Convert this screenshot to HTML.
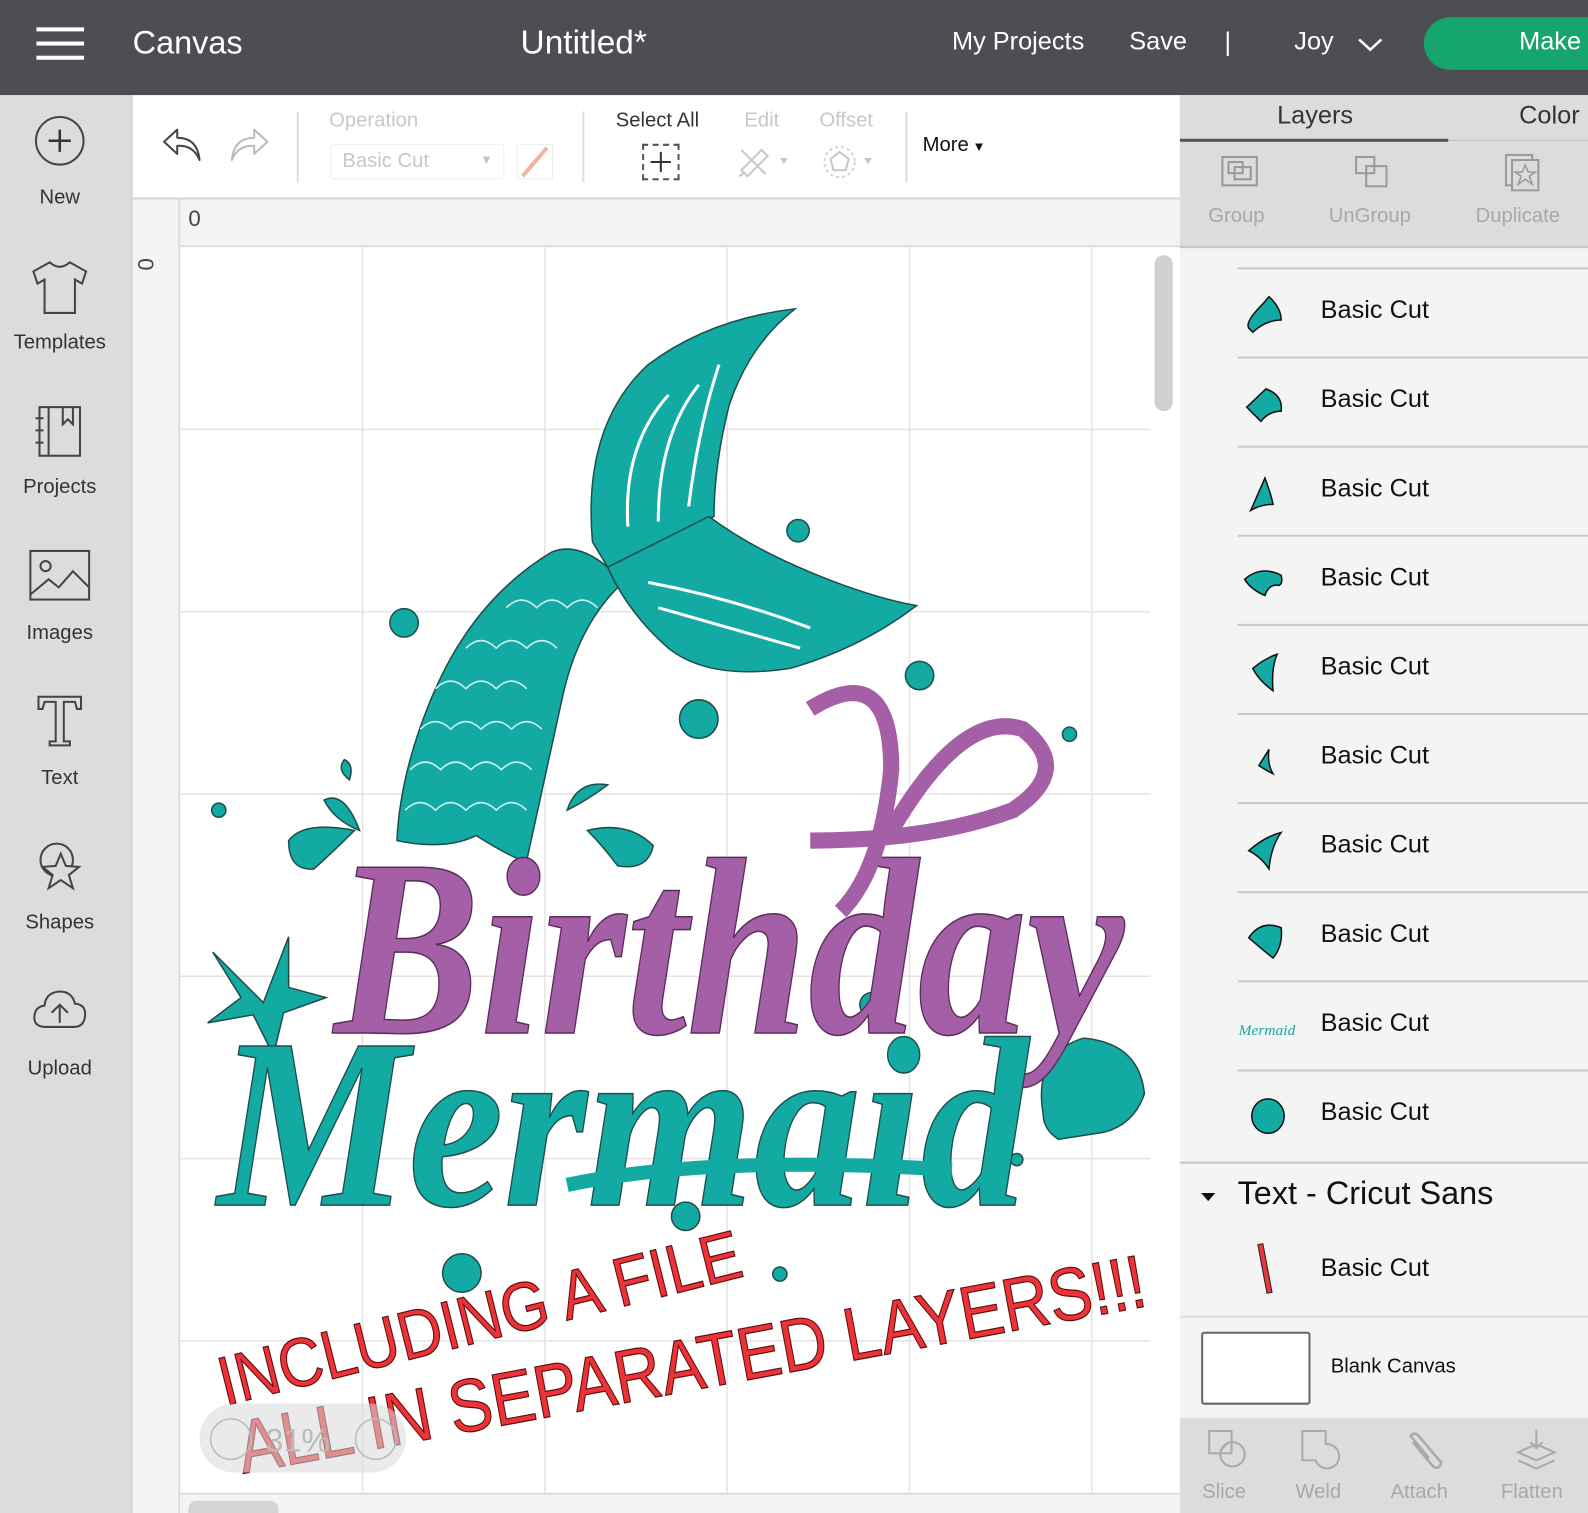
<!DOCTYPE html>
<html><head><meta charset="utf-8">
<style>
*{margin:0;padding:0;box-sizing:border-box}
body{width:1588px;height:1513px;overflow:hidden;background:#fff;font-family:"Liberation Sans",sans-serif}
#wrap{position:absolute;left:0;top:0;width:1568px;height:1494px;transform:scale(1.01276);transform-origin:0 0;overflow:hidden}
.abs{position:absolute}
#top{left:0;top:0;width:1568px;height:94px;background:#4d4e53;color:#fff}
#top div{position:absolute;font-size:30px;line-height:1}
#side{left:0;top:94px;width:131px;height:1419px;background:#dcdcdc;border-right:1px solid #c8c8c8}
.si{position:absolute;left:0;width:118px;text-align:center;font-size:20px;color:#333}
#tool{left:131px;top:94px;width:1034px;height:103px;background:#fff;border-bottom:2px solid #d6d6d6}
.tl{position:absolute;font-size:20px;color:#c8c8c8}
#rp{left:1165px;top:94px;width:403px;height:1419px;background:#f4f4f4}
.row{position:absolute;left:0;width:403px;height:88px}
.row .ln{position:absolute;left:57px;right:0;top:0;border-top:2px solid #c9c9c9}
.row .t{position:absolute;left:139px;top:28px;font-size:25px;color:#111}
.row svg{position:absolute;left:60px;top:20px}
.bt{position:absolute;font-size:20px;color:#a8a8a8;text-align:center}
</style></head><body><div id="wrap">

<div id="top" class="abs">
  <div style="left:36px;top:27px;width:47px;height:4px;background:#fff"></div>
  <div style="left:36px;top:41px;width:47px;height:4px;background:#fff"></div>
  <div style="left:36px;top:55px;width:47px;height:4px;background:#fff"></div>
  <div style="left:131px;top:26px;font-size:32px">Canvas</div>
  <div style="left:514px;top:25px;font-size:33px">Untitled*</div>
  <div style="left:940px;top:29px;font-size:25px">My Projects</div>
  <div style="left:1115px;top:29px;font-size:25px">Save</div>
  <div style="left:1209px;top:28px;font-size:26px">|</div>
  <div style="left:1278px;top:29px;font-size:25px">Joy</div>
  <svg style="position:absolute;left:1340px;top:36px" width="26" height="16"><path d="M2 3 L13 13 L24 3" stroke="#fff" stroke-width="2.5" fill="none"/></svg>
  <div style="left:1406px;top:17px;width:200px;height:52px;background:#16a56c;border-radius:26px"></div>
  <div style="left:1500px;top:29px;font-size:25px">Make</div>
</div>

<div id="side" class="abs">
  <svg class="abs" style="left:34px;top:20px" width="50" height="50"><circle cx="25" cy="25" r="23.5" fill="none" stroke="#444" stroke-width="2"/><path d="M25 14V36M14 25H36" stroke="#333" stroke-width="2.5"/></svg>
  <div class="si" style="top:90px">New</div>
  <svg class="abs" style="left:29px;top:162px" width="60" height="56"><path d="M20 3 Q30 12 40 3 L56 12 L52 24 L45 20 L45 53 L15 53 L15 20 L8 24 L4 12 Z" fill="none" stroke="#444" stroke-width="2"/></svg>
  <div class="si" style="top:233px">Templates</div>
  <svg class="abs" style="left:34px;top:305px" width="50" height="56"><rect x="5" y="3" width="40" height="48" fill="none" stroke="#444" stroke-width="2"/><path d="M14 3V51M28 3V20L33 15L38 20V3M1 14H9M1 26H9M1 38H9" stroke="#444" stroke-width="2" fill="none"/></svg>
  <div class="si" style="top:376px">Projects</div>
  <svg class="abs" style="left:28px;top:448px" width="62" height="52"><rect x="2" y="2" width="58" height="48" fill="none" stroke="#444" stroke-width="2"/><circle cx="17" cy="17" r="5" fill="none" stroke="#444" stroke-width="2"/><path d="M2 45 L20 30 L30 38 L44 22 L60 38" fill="none" stroke="#444" stroke-width="2"/></svg>
  <div class="si" style="top:520px">Images</div>
  <svg class="abs" style="left:36px;top:592px" width="46" height="52"><path d="M2 2H44V14H40L38 7H27V46H33V50H13V46H19V7H8L6 14H2Z" fill="none" stroke="#444" stroke-width="2"/></svg>
  <div class="si" style="top:663px">Text</div>
  <svg class="abs" style="left:36px;top:735px" width="48" height="52"><circle cx="20" cy="20" r="16" fill="none" stroke="#444" stroke-width="2"/><path d="M24 14 L29 26 L42 27 L32 35 L36 48 L24 40 L12 48 L16 35 L6 27 L19 26Z" fill="#dcdcdc" stroke="#444" stroke-width="2"/></svg>
  <div class="si" style="top:806px">Shapes</div>
  <svg class="abs" style="left:31px;top:880px" width="56" height="46"><path d="M14 40 Q2 40 3 29 Q4 20 13 19 Q14 6 28 5 Q40 5 43 17 Q54 18 53 29 Q52 40 42 40 Z" fill="none" stroke="#444" stroke-width="2"/><path d="M28 36V18M20 26L28 18L36 26" fill="none" stroke="#444" stroke-width="2"/></svg>
  <div class="si" style="top:950px">Upload</div>
</div>

<div id="tool" class="abs">
  <svg class="abs" style="left:28px;top:30px" width="42" height="36"><path d="M16 4 L3 16 L16 28 L16 20 Q32 19 38 34 Q36 12 16 12 Z" fill="none" stroke="#444" stroke-width="2" stroke-linejoin="round"/></svg>
  <svg class="abs" style="left:94px;top:30px" width="42" height="36"><path d="M26 4 L39 16 L26 28 L26 20 Q10 19 4 34 Q6 12 26 12 Z" fill="none" stroke="#bbb" stroke-width="2" stroke-linejoin="round"/></svg>
  <div class="abs" style="left:162px;top:16px;width:2px;height:70px;background:#ddd"></div>
  <div class="tl" style="left:194px;top:14px">Operation</div>
  <div class="abs" style="left:195px;top:48px;width:172px;height:35px;border:1px solid #eee;border-radius:3px"></div>
  <div class="tl" style="left:207px;top:54px">Basic Cut</div>
  <div class="tl" style="left:343px;top:56px;font-size:13px">▼</div>
  <div class="abs" style="left:379px;top:48px;width:36px;height:35px;border:1px solid #eee"></div>
  <svg class="abs" style="left:379px;top:48px" width="36" height="36"><path d="M30 4 L6 32" stroke="#f3b3a2" stroke-width="4"/></svg>
  <div class="abs" style="left:444px;top:16px;width:2px;height:70px;background:#ddd"></div>
  <div class="tl" style="left:477px;top:14px;color:#333">Select All</div>
  <div class="abs" style="left:503px;top:48px;width:37px;height:36px;border:2px dashed #555"></div>
  <svg class="abs" style="left:503px;top:48px" width="37" height="36"><path d="M18.5 8V28M8.5 18H28.5" stroke="#333" stroke-width="2"/></svg>
  <div class="tl" style="left:604px;top:14px">Edit</div>
  <svg class="abs" style="left:595px;top:46px" width="56" height="38"><path d="M6 28 L26 8 L32 14 L12 34 Z M6 8 L30 32 M4 34 L10 30" fill="none" stroke="#c8c8c8" stroke-width="2"/><path d="M44 16 L52 16 L48 22Z" fill="#c8c8c8"/></svg>
  <div class="tl" style="left:678px;top:14px">Offset</div>
  <svg class="abs" style="left:680px;top:46px" width="56" height="38"><circle cx="18" cy="20" r="15" fill="none" stroke="#d4d4d4" stroke-width="2" stroke-dasharray="3 3"/><path d="M18 10 L27 17 L24 28 L12 28 L9 17Z" fill="none" stroke="#c8c8c8" stroke-width="2"/><path d="M42 16 L50 16 L46 22Z" fill="#c8c8c8"/></svg>
  <div class="abs" style="left:763px;top:16px;width:2px;height:70px;background:#ddd"></div>
  <div class="tl" style="left:780px;top:38px;color:#111">More<span style="font-size:13px"> ▼</span></div>
</div>

<div class="abs" style="left:131px;top:197px;width:1034px;height:47px;background:#f4f4f4;border-bottom:2px solid #ddd"></div>
<div class="abs" style="left:131px;top:197px;width:47px;height:1316px;background:#f4f4f4;border-right:2px solid #ddd"></div>
<div class="abs" style="left:186px;top:203px;font-size:22px;color:#444">0</div>
<div class="abs" style="left:137px;top:248px;font-size:22px;color:#444;transform:rotate(90deg)">0</div>

<svg class="abs" style="left:178px;top:244px" width="987" height="1269">
  <g stroke="#e3e3e3" stroke-width="1.5">
    <path d="M180 -8V1231M360 -8V1231M540 -8V1231M720 -8V1231M900 -8V1231"/>
    <path d="M-8 180H958M-8 360H958M-8 540H958M-8 720H958M-8 900H958M-8 1080H958"/>
  </g>
  <rect x="0" y="1231" width="987" height="38" fill="#f4f4f4"/>
  <line x1="0" y1="1231" x2="987" y2="1231" stroke="#ddd" stroke-width="2"/>
  <rect x="8" y="1238" width="89" height="30" rx="8" fill="#d4d4d4"/>
  <rect x="962" y="8" width="18" height="154" rx="9" fill="#d0d0d0"/>
</svg>

<svg class="abs" style="left:0;top:0" width="1165" height="1513">
<g fill="#14aaa4" stroke="#1e4e4c" stroke-width="1.5">
  <path d="M600 560 Q570 535 545 545 Q470 590 430 680 Q395 760 392 830 Q440 840 470 825 Q510 850 520 850 Q540 760 555 690 Q570 620 610 580Z"/>
  <path d="M585 535 Q575 420 640 360 Q700 315 785 305 Q740 340 720 400 Q705 460 705 510 Q680 520 650 545 Q620 560 600 560Z"/>
  <path d="M600 560 Q640 540 700 510 Q740 540 800 565 Q860 590 905 598 Q850 640 780 660 Q700 672 660 640 Q620 605 600 560Z"/>
  <circle cx="399" cy="615" r="14"/><circle cx="788" cy="524" r="11"/><circle cx="908" cy="667" r="14"/>
  <circle cx="690" cy="710" r="19"/><circle cx="1056" cy="725" r="7"/><circle cx="216" cy="800" r="7"/>
  <circle cx="861" cy="992" r="12"/><circle cx="1004" cy="1145" r="6"/><circle cx="677" cy="1201" r="14"/>
  <circle cx="456" cy="1257" r="19"/><circle cx="770" cy="1258" r="7"/>
  <path d="M285 830 Q300 810 350 820 Q330 840 310 858 Q285 860 285 830Z"/>
  <path d="M320 790 Q340 780 355 820 Q330 810 320 790Z"/>
  <path d="M340 750 Q350 755 345 770 Q332 760 340 750Z"/>
  <path d="M580 820 Q620 810 645 835 Q640 860 610 855 Q595 835 580 820Z"/>
  <path d="M560 800 Q570 770 600 775 Q580 790 560 800Z"/>
  <path d="M260 990 L285 925 L285 975 L322 985 L280 1000 L270 1042 L250 1002 L205 1010 L238 985 L210 940Z"/>
  <path d="M1030 1100 Q1020 1040 1070 1025 Q1125 1030 1130 1080 Q1120 1110 1090 1118 L1045 1125 Q1030 1115 1030 1100Z"/>
</g>
<g fill="none" stroke="#fff" stroke-width="3">
  <path d="M620 520 Q615 440 660 390"/><path d="M650 515 Q650 430 690 380"/><path d="M680 500 Q690 420 710 360"/>
  <path d="M640 575 Q720 590 800 620"/><path d="M650 600 Q720 620 790 640"/>
</g>
<g fill="none" stroke="#d7efee" stroke-width="1.5">
  <path d="M430 680 q15 -15 30 0 q15 -15 30 0 q15 -15 30 0"/><path d="M415 720 q15 -15 30 0 q15 -15 30 0 q15 -15 30 0 q15 -15 30 0"/>
  <path d="M405 760 q15 -15 30 0 q15 -15 30 0 q15 -15 30 0 q15 -15 30 0"/><path d="M400 800 q15 -15 30 0 q15 -15 30 0 q15 -15 30 0 q15 -15 30 0"/>
  <path d="M460 640 q15 -15 30 0 q15 -15 30 0 q15 -15 30 0"/><path d="M500 600 q15 -15 30 0 q15 -15 30 0 q15 -15 30 0"/>
</g>
<text x="330" y="1020" font-family="Liberation Serif,serif" font-style="italic" font-weight="bold" font-size="250" fill="#a45fa6" stroke="#5a2d5c" stroke-width="1.5" textLength="780" lengthAdjust="spacingAndGlyphs">Birthday</text>
<path d="M800 700 Q880 650 880 760 Q870 860 830 900 M880 820 Q950 700 1010 720 Q1060 760 1000 800 Q920 830 800 830" fill="none" stroke="#a45fa6" stroke-width="16"/>
<text x="215" y="1190" font-family="Liberation Serif,serif" font-style="italic" font-weight="bold" font-size="240" fill="#14aaa4" stroke="#1e4e4c" stroke-width="1.5" textLength="800" lengthAdjust="spacingAndGlyphs">Mermaid</text>
<path d="M560 1170 Q700 1140 940 1155" fill="none" stroke="#14aaa4" stroke-width="14"/>
<g font-family="Liberation Sans,sans-serif" font-size="68" fill="#ee3338" stroke="#5a1010" stroke-width="1.2">
  <text transform="translate(222,1388) rotate(-14)" textLength="530" lengthAdjust="spacingAndGlyphs">INCLUDING A FILE</text>
  <text transform="translate(240,1455) rotate(-10.5)" font-size="74" textLength="910" lengthAdjust="spacingAndGlyphs">ALL IN SEPARATED LAYERS!!!</text>
</g>
<rect x="197" y="1386" width="204" height="68" rx="34" fill="#d8d8d8" opacity="0.55"/>
<circle cx="228" cy="1421" r="20" fill="none" stroke="#bbb" stroke-width="1.5"/>
<circle cx="371" cy="1421" r="20" fill="none" stroke="#bbb" stroke-width="1.5"/>
<text x="262" y="1433" font-family="Liberation Sans,sans-serif" font-size="32" fill="#bbb">31%</text>
</svg>

<div id="rp" class="abs">
  <div class="abs" style="left:0;top:0;width:403px;height:150px;background:#dcdcdc"></div>
  <div class="abs" style="left:96px;top:6px;font-size:25px;color:#333">Layers</div>
  <div class="abs" style="left:335px;top:6px;font-size:25px;color:#333">Color</div>
  <div class="abs" style="left:0;top:43px;width:265px;height:3px;background:#555"></div>
  <div class="abs" style="left:265px;top:44px;width:158px;height:1px;background:#bbb"></div>
  <svg class="abs" style="left:38px;top:57px" width="42" height="36"><rect x="4" y="4" width="34" height="28" fill="none" stroke="#999" stroke-width="2"/><rect x="10" y="9" width="14" height="11" fill="none" stroke="#999" stroke-width="2"/><rect x="16" y="14" width="16" height="12" fill="none" stroke="#999" stroke-width="2"/></svg>
  <svg class="abs" style="left:170px;top:57px" width="42" height="38"><rect x="4" y="4" width="18" height="16" fill="none" stroke="#999" stroke-width="2"/><rect x="14" y="13" width="20" height="20" fill="none" stroke="#999" stroke-width="2"/></svg>
  <svg class="abs" style="left:318px;top:57px" width="42" height="38"><rect x="4" y="2" width="26" height="30" fill="none" stroke="#999" stroke-width="2"/><rect x="10" y="7" width="26" height="30" fill="#dcdcdc" stroke="#999" stroke-width="2"/><path d="M23 12 L26 19 L33 19 L27 23 L30 31 L23 26 L16 31 L19 23 L13 19 L20 19Z" fill="none" stroke="#999" stroke-width="1.5"/></svg>
  <div class="bt" style="left:28px;top:108px">Group</div>
  <div class="bt" style="left:147px;top:108px">UnGroup</div>
  <div class="bt" style="left:292px;top:108px">Duplicate</div>
  <div class="abs" style="left:0;top:149px;width:403px;height:2px;background:#c4c4c4"></div>

  <div class="row" style="top:170px"><div class="ln"></div><svg width="50" height="50"><path d="M8 40 Q4 34 22 16 L28 9 Q40 20 40 32 Q25 32 12 44Z" fill="#14aaa4" stroke="#111" stroke-width="1.5"/></svg><div class="t">Basic Cut</div></div>
  <div class="row" style="top:258px"><div class="ln"></div><svg width="50" height="50"><path d="M6 30 L25 12 Q42 18 40 34 Q28 34 20 44Z" fill="#14aaa4" stroke="#111" stroke-width="1.5"/></svg><div class="t">Basic Cut</div></div>
  <div class="row" style="top:346px"><div class="ln"></div><svg width="50" height="50"><path d="M10 44 L24 12 Q30 28 32 38 Q20 38 10 44Z" fill="#14aaa4" stroke="#111" stroke-width="1.5"/></svg><div class="t">Basic Cut</div></div>
  <div class="row" style="top:434px"><div class="ln"></div><svg width="50" height="50"><path d="M4 24 Q20 10 40 20 Q42 28 38 30 Q28 28 24 40 Q10 34 4 24Z" fill="#14aaa4" stroke="#111" stroke-width="1.5"/></svg><div class="t">Basic Cut</div></div>
  <div class="row" style="top:522px"><div class="ln"></div><svg width="50" height="50"><path d="M12 24 Q24 14 36 10 Q30 24 32 46 Q18 36 12 24Z" fill="#14aaa4" stroke="#111" stroke-width="1.5"/></svg><div class="t">Basic Cut</div></div>
  <div class="row" style="top:610px"><div class="ln"></div><svg width="50" height="50"><path d="M18 32 L28 16 Q26 30 32 40 Q24 36 18 32Z" fill="#14aaa4" stroke="#111" stroke-width="1.5"/></svg><div class="t">Basic Cut</div></div>
  <div class="row" style="top:698px"><div class="ln"></div><svg width="50" height="50"><path d="M8 28 Q24 14 40 10 Q30 24 28 46 Q20 34 8 28Z" fill="#14aaa4" stroke="#111" stroke-width="1.5"/></svg><div class="t">Basic Cut</div></div>
  <div class="row" style="top:786px"><div class="ln"></div><svg width="50" height="50"><path d="M8 26 Q20 8 40 16 Q42 34 32 46 Q22 38 8 26Z" fill="#14aaa4" stroke="#111" stroke-width="1.5"/></svg><div class="t">Basic Cut</div></div>
  <div class="row" style="top:874px"><div class="ln"></div><svg width="60" height="50" style="left:56px"><text x="2" y="34" font-family="Liberation Serif,serif" font-style="italic" font-size="15" fill="#14aaa4" textLength="56" lengthAdjust="spacingAndGlyphs">Mermaid</text></svg><div class="t">Basic Cut</div></div>
  <div class="row" style="top:962px"><div class="ln"></div><svg width="50" height="50"><ellipse cx="27" cy="26" rx="16" ry="17" fill="#14aaa4" stroke="#111" stroke-width="1.5"/></svg><div class="t">Basic Cut</div></div>

  <div class="abs" style="left:0;top:1053px;width:403px;height:2px;background:#c4c4c4"></div>
  <svg class="abs" style="left:20px;top:1082px" width="16" height="12"><path d="M1 2 L15 2 L8 10Z" fill="#111"/></svg>
  <div class="abs" style="left:57px;top:1066px;font-size:32px;color:#111">Text - Cricut Sans</div>
  <svg class="abs" style="left:74px;top:1132px" width="24" height="56"><path d="M3 3 L8 2 L17 50 L12 51Z" fill="#e8363b" stroke="#222" stroke-width="1"/></svg>
  <div class="abs" style="left:139px;top:1144px;font-size:25px;color:#111">Basic Cut</div>
  <div class="abs" style="left:0;top:1205px;width:403px;height:2px;background:#ddd"></div>
  <div class="abs" style="left:21px;top:1221px;width:108px;height:72px;background:#fff;border:2px solid #666;border-radius:3px"></div>
  <div class="abs" style="left:149px;top:1244px;font-size:20px;color:#111">Blank Canvas</div>

  <div class="abs" style="left:0;top:1306px;width:403px;height:113px;background:#dcdcdc"></div>
  <svg class="abs" style="left:26px;top:1316px" width="44" height="44"><rect x="3" y="3" width="22" height="22" fill="none" stroke="#aaa" stroke-width="2"/><circle cx="26" cy="26" r="12" fill="none" stroke="#aaa" stroke-width="2"/><path d="M14 22 L22 14" stroke="#aaa" stroke-width="2"/></svg>
  <svg class="abs" style="left:118px;top:1316px" width="44" height="44"><path d="M3 3 H26 V16 A12 12 0 1 1 16 32 H3 Z" fill="none" stroke="#aaa" stroke-width="2"/></svg>
  <svg class="abs" style="left:222px;top:1316px" width="44" height="44"><path d="M8 14 L28 38 Q34 42 36 34 L14 8 Q9 3 6 8 L24 30" fill="none" stroke="#aaa" stroke-width="2.5"/></svg>
  <svg class="abs" style="left:330px;top:1316px" width="44" height="44"><path d="M22 2 V20 M16 14 L22 20 L28 14 M4 24 L22 16 L40 24 L22 32 Z M4 32 L22 40 L40 32" fill="none" stroke="#aaa" stroke-width="2"/></svg>
  <div class="bt" style="left:22px;top:1368px">Slice</div>
  <div class="bt" style="left:114px;top:1368px">Weld</div>
  <div class="bt" style="left:208px;top:1368px">Attach</div>
  <div class="bt" style="left:317px;top:1368px">Flatten</div>
</div>
</div></body></html>
